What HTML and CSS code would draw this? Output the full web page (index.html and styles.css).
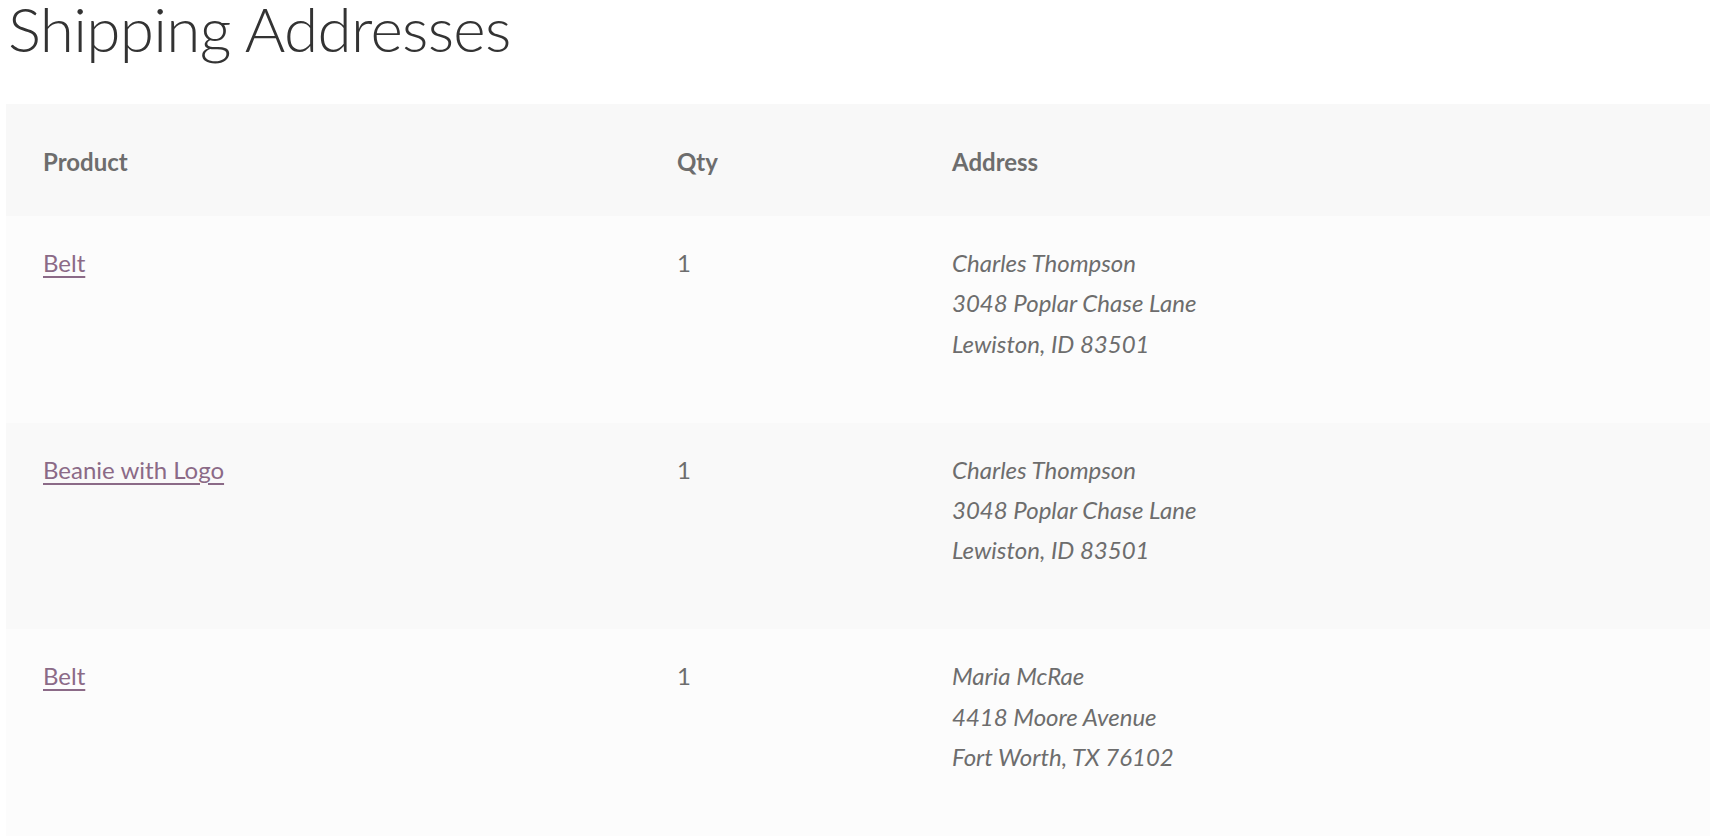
FILE: index.html
```html
<!DOCTYPE html>
<html lang="en">
<head>
<meta charset="utf-8">
<title>Shipping Addresses</title>
<link rel="stylesheet" href="styles.css">
</head>
<body>
<div class="page">
  <h1 class="title">Shipping Addresses</h1>
  <table class="ship-table">
    <colgroup>
      <col class="col-product">
      <col class="col-qty">
      <col class="col-address">
    </colgroup>
    <thead>
      <tr>
        <th>Product</th>
        <th>Qty</th>
        <th>Address</th>
      </tr>
    </thead>
    <tbody>
      <tr>
        <td><a href="#">Belt</a></td>
        <td>1</td>
        <td><address>Charles Thompson<br>3048 Poplar Chase Lane<br>Lewiston, ID 83501</address></td>
      </tr>
      <tr>
        <td><a href="#">Beanie with Logo</a></td>
        <td>1</td>
        <td><address>Charles Thompson<br>3048 Poplar Chase Lane<br>Lewiston, ID 83501</address></td>
      </tr>
      <tr>
        <td><a href="#">Belt</a></td>
        <td>1</td>
        <td><address>Maria McRae<br>4418 Moore Avenue<br>Fort Worth, TX 76102</address></td>
      </tr>
    </tbody>
  </table>
</div>
</body>
</html>
```
FILE: styles.css
```css
html, body {
  margin: 0;
  padding: 0;
  background: #ffffff;
}

body {
  font-family: "Lato", "Source Sans Pro", "Liberation Sans", sans-serif;
  font-size: 24px;
  line-height: 40.4px;
  color: #6d6d6d;
}

.page {
  padding: 0 2px 0 6px;
}

.title {
  margin: 0 0 48px 2px;
  font-size: 62px;
  line-height: 56px;
  font-weight: 300;
  color: #333333;
  letter-spacing: -0.7px;
}

.ship-table {
  width: 1704px;
  border-collapse: collapse;
  border-spacing: 0;
  table-layout: fixed;
}

.col-product { width: 634px; }
.col-qty { width: 275px; }
.col-address { width: 795px; }

.ship-table th {
  text-align: left;
  font-weight: 700;
  color: #6d6d6d;
  background: #f8f8f8;
  padding: 38px 37px 34px;
  line-height: 40px;
  vertical-align: middle;
}

.ship-table td {
  padding: 27px 37px 23px;
  vertical-align: top;
  background: #fcfcfc;
}

.ship-table tbody tr:nth-child(2n) td {
  background: #f9f9f9;
}

.ship-table a {
  color: #8b6a87;
  text-decoration: underline;
  text-underline-offset: 4px;
  text-decoration-thickness: 2px;
}

.ship-table address {
  font-style: italic;
  margin: 0 0 35.4px;
}
```
